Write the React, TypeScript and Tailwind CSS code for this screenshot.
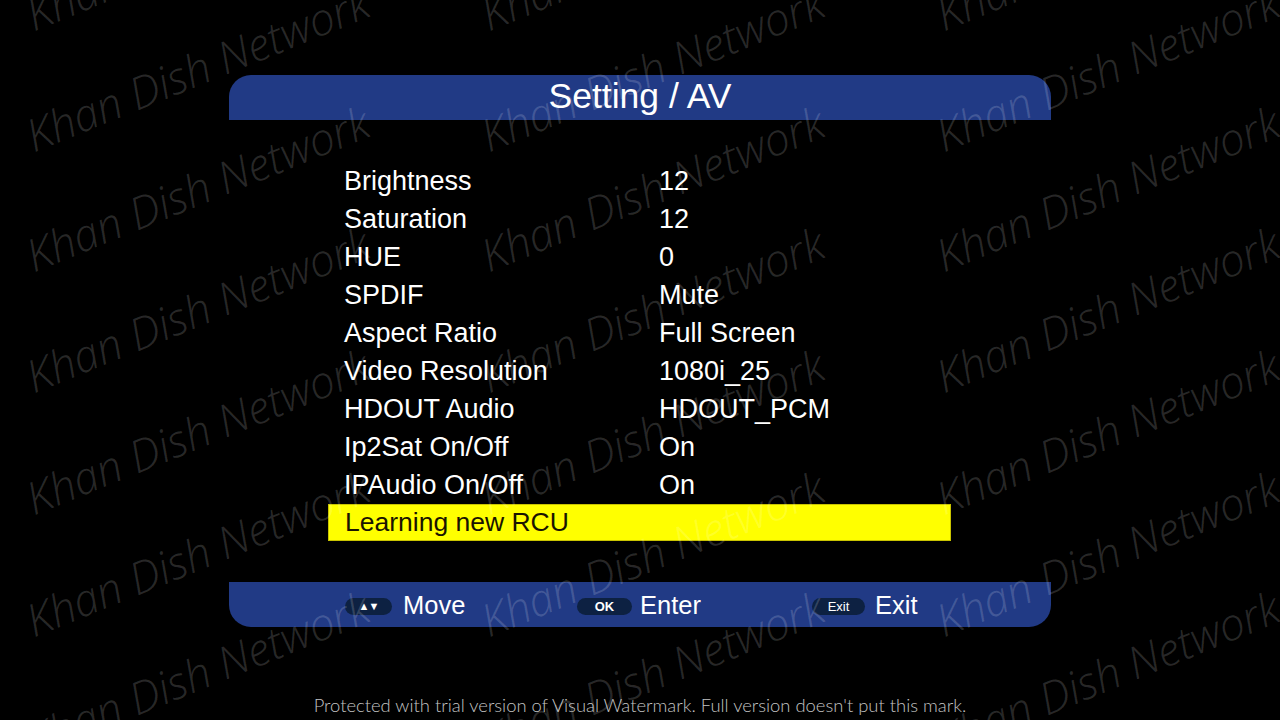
import React from "react";

const rows: [string, string][] = [
  ["Brightness", "12"],
  ["Saturation", "12"],
  ["HUE", "0"],
  ["SPDIF", "Mute"],
  ["Aspect Ratio", "Full Screen"],
  ["Video Resolution", "1080i_25"],
  ["HDOUT Audio", "HDOUT_PCM"],
  ["Ip2Sat On/Off", "On"],
  ["IPAudio On/Off", "On"],
];

// watermark grid: baseline start of each "Khan Dish Network"
const marks: { x: number; y: number }[] = [];
for (const x of [36, 491, 946]) {
  for (const y of [36, 157, 277, 398, 520, 642, 762]) {
    marks.push({ x, y });
  }
}

function Key({ children, w }: { children: React.ReactNode; w: string }) {
  return (
    <span
      className={`${w} h-[17px] rounded-full bg-[#0d2142] text-white text-[13px] font-bold flex items-center justify-center leading-none`}
    >
      {children}
    </span>
  );
}

export default function App() {
  return (
    <div
      className="relative w-[1280px] h-[720px] bg-black overflow-hidden text-white"
      style={{ fontFamily: '"Liberation Sans", Arial, sans-serif' }}
    >
      <div className="w-[822px] ml-[229px] pt-[75px]">
        <div className="h-[45px] bg-[#213a85] rounded-t-[22px] flex items-center justify-center text-[35.5px] leading-none pb-[1px]">
          Setting / AV
        </div>

        <div className="ml-[99px] w-[623px] mt-[42px]">
          {rows.map(([label, value]) => (
            <div key={label} className="h-[38px] flex items-center pl-[16px] text-[27px] leading-none">
              <span className="w-[315px]">{label}</span>
              <span>{value}</span>
            </div>
          ))}
          <div className="h-[37px] flex items-center pl-[16px] text-[26.5px] leading-none bg-[#ffff00] text-[#1a1400] border border-[#c9c400]">
            Learning new RCU
          </div>
        </div>

        <div className="mt-[41px] h-[45px] bg-[#213a85] rounded-b-[22px] flex items-center pl-[116px] pt-[3px] text-[25.5px] leading-none">
          <div className="w-[232px] flex items-center gap-[11px]">
            <Key w="w-[47px]">
              <span className="text-[11px] tracking-[-1px]">▲▼</span>
            </Key>
            <span>Move</span>
          </div>
          <div className="w-[235px] flex items-center gap-[8px]">
            <Key w="w-[55px]">OK</Key>
            <span>Enter</span>
          </div>
          <div className="flex items-center gap-[10px]">
            <Key w="w-[53px]">
              <span className="font-normal text-[13px]">Exit</span>
            </Key>
            <span>Exit</span>
          </div>
        </div>
      </div>

      <div
        className="absolute left-0 right-0 top-[696px] text-center text-[18.4px] text-[#c4c4c4] leading-none"
        style={{ fontFamily: "Lato, sans-serif", fontWeight: 300 }}
      >
        Protected with trial version of Visual Watermark. Full version doesn't put this mark.
      </div>

      <div className="absolute inset-0 pointer-events-none">
        {marks.map((m, i) => (
          <span
            key={i}
            className="absolute whitespace-nowrap italic text-[44.5px] leading-none text-white/[0.17] origin-bottom-left -rotate-[22deg]"
            style={{ left: m.x, top: m.y - 44, fontFamily: '"Open Sans", sans-serif', fontWeight: 300 }}
          >
            Khan Dish Network
          </span>
        ))}
      </div>
    </div>
  );
}
